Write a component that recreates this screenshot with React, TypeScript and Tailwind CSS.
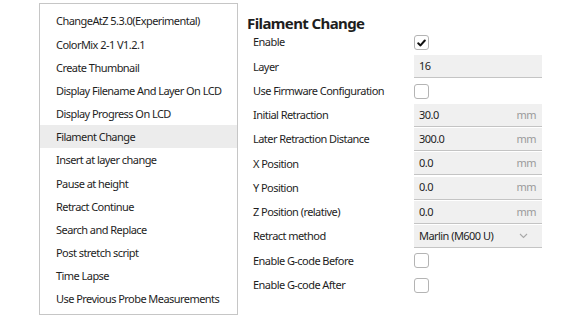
import React from "react";

const scripts = [
  "ChangeAtZ 5.3.0(Experimental)",
  "ColorMix 2-1 V1.2.1",
  "Create Thumbnail",
  "Display Filename And Layer On LCD",
  "Display Progress On LCD",
  "Filament Change",
  "Insert at layer change",
  "Pause at height",
  "Retract Continue",
  "Search and Replace",
  "Post stretch script",
  "Time Lapse",
  "Use Previous Probe Measurements",
];

type Row =
  | { label: string; kind: "check"; checked: boolean }
  | { label: string; kind: "text"; value: string; unit?: string }
  | { label: string; kind: "select"; value: string };

const rows: Row[] = [
  { label: "Enable", kind: "check", checked: true },
  { label: "Layer", kind: "text", value: "16" },
  { label: "Use Firmware Configuration", kind: "check", checked: false },
  { label: "Initial Retraction", kind: "text", value: "30.0", unit: "mm" },
  { label: "Later Retraction Distance", kind: "text", value: "300.0", unit: "mm" },
  { label: "X Position", kind: "text", value: "0.0", unit: "mm" },
  { label: "Y Position", kind: "text", value: "0.0", unit: "mm" },
  { label: "Z Position (relative)", kind: "text", value: "0.0", unit: "mm" },
  { label: "Retract method", kind: "select", value: "Marlin (M600 U)" },
  { label: "Enable G-code Before", kind: "check", checked: false },
  { label: "Enable G-code After", kind: "check", checked: false },
];

function Checkbox({ checked }: { checked: boolean }) {
  return (
    <div className="w-[15px] h-[15px] rounded-[3px] border border-[#b4b4b4] bg-white flex items-center justify-center">
      {checked && (
        <svg width="9" height="8" viewBox="0 0 9 8">
          <path d="M1.2 4.3 L3.5 6.4 L7.8 1.5" stroke="#111" strokeWidth="2" fill="none" strokeLinecap="round" strokeLinejoin="round" />
        </svg>
      )}
    </div>
  );
}

export default function App() {
  return (
    <div
      className="w-[570px] h-[321px] bg-white flex pl-[39px] pt-[3px] text-[#1e1e1e]"
      style={{ fontFamily: '"Noto Sans", "Open Sans", sans-serif' }}
    >
      <div className="w-[199px] h-[312px] border border-[#c6c6c6] pt-[5.4px] flex flex-col shrink-0">
        {scripts.map((s) => (
          <div
            key={s}
            className={`h-[23.17px] shrink-0 flex items-center pl-[16px] text-[11px] tracking-[-0.55px] leading-none whitespace-nowrap ${
              s === "Filament Change" ? "bg-[#ececec]" : ""
            }`}
          >
            {s}
          </div>
        ))}
      </div>
      <div className="ml-[9px] flex flex-col">
        <div className="h-[27.6px] flex items-end text-[15px] tracking-[-0.6px] font-bold leading-none pt-[12px]">
          Filament Change
        </div>
        <div className="flex flex-col pl-[6px]">
          {rows.map((r) => (
            <div key={r.label} className="h-[24.26px] flex items-center text-[11px] tracking-[-0.55px]">
              <div className="w-[161px] whitespace-nowrap">{r.label}</div>
              {r.kind === "check" && <Checkbox checked={r.checked} />}
              {r.kind === "text" && (
                <div className="w-[128px] h-[23px] bg-[#f0f0f0] border-b border-[#c4c4c4] flex items-center justify-between pl-[5px] pr-[6px]">
                  <span>{r.value}</span>
                  {r.unit && <span className="text-[#9a9a9a]">{r.unit}</span>}
                </div>
              )}
              {r.kind === "select" && (
                <div className="w-[128px] h-[23px] bg-[#f0f0f0] border-b border-[#c4c4c4] flex items-center justify-between pl-[5px] pr-[14px]">
                  <span>{r.value}</span>
                  <svg width="9" height="6" viewBox="0 0 9 6">
                    <path d="M1 1 L4.5 4.5 L8 1" stroke="#a8a8a8" strokeWidth="1.1" fill="none" />
                  </svg>
                </div>
              )}
            </div>
          ))}
        </div>
      </div>
    </div>
  );
}
